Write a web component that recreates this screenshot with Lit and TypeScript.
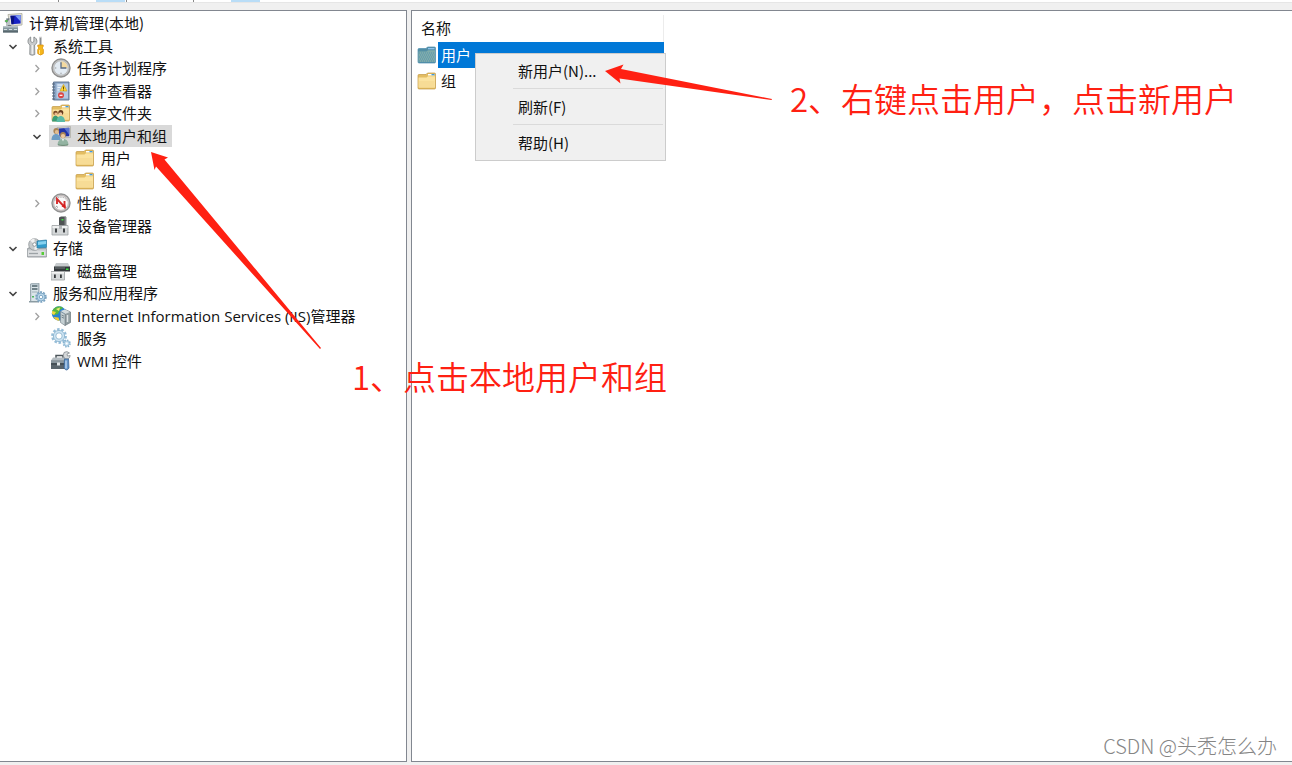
import { LitElement, html, css, svg, nothing, type TemplateResult } from "lit";
import { customElement } from "lit/decorators.js";
import { classMap } from "lit/directives/class-map.js";

type Node = { level: number; icon: string; latin?: string; text: string; toggle?: "open" | "closed"; selected?: boolean };

const NODES: Node[] = [
  { level: 0, icon: "computer", text: "计算机管理(本地)" },
  { level: 1, icon: "tools", text: "系统工具", toggle: "open" },
  { level: 2, icon: "clock", text: "任务计划程序", toggle: "closed" },
  { level: 2, icon: "events", text: "事件查看器", toggle: "closed" },
  { level: 2, icon: "shared", text: "共享文件夹", toggle: "closed" },
  { level: 2, icon: "users", text: "本地用户和组", toggle: "open", selected: true },
  { level: 3, icon: "folder", text: "用户" },
  { level: 3, icon: "folder", text: "组" },
  { level: 2, icon: "perf", text: "性能", toggle: "closed" },
  { level: 2, icon: "device", text: "设备管理器" },
  { level: 1, icon: "storage", text: "存储", toggle: "open" },
  { level: 2, icon: "disk", text: "磁盘管理" },
  { level: 1, icon: "server", text: "服务和应用程序", toggle: "open" },
  { level: 2, icon: "iis", latin: "Internet Information Services (IIS)", text: "管理器", toggle: "closed" },
  { level: 2, icon: "gears", text: "服务" },
  { level: 2, icon: "wmi", latin: "WMI", text: " 控件" },
];

const folderShape = svg`
  <path d="M1 4.500q0-1 1-1h7l1.500-1.500h7q1 0 1 1V17q0 1-1 1H2q-1 0-1-1z" fill="#e3bd62" stroke="#c39a45" stroke-width=".7"/>
  <path d="M11 3h6.500v1.500H11z" fill="#fff"/><path d="M14.500 3h3v1.300h-3z" fill="#3f9be0"/>
  <path d="M1.500 6.500h8l1.500-1.300h7V16.500H1.500z" fill="#fbe3a0"/>
  <path d="M2 10h15.500v6.500H2z" fill="#f7dc96"/>`;

const ICONS: Record<string, TemplateResult> = {
  computer: svg`
    <path d="M5 1.500 19 0.500V12L7 13z" fill="#e4e4dc" stroke="#aaa99b" stroke-width=".8"/>
    <path d="M7.500 2.800 17.600 2v8.600l-9.100.7z" fill="#1823c4"/>
    <path d="M12 2.500l5.600-.5v6.500z" fill="#7d9af5"/><path d="M7.500 2.800l4 .2-1 8.200-2 .1z" fill="#0b1280"/>
    <path d="M3 5h4v8H3z" fill="#bcc3c6"/><path d="M1.500 8l4-3 1 1-3 4z" fill="#707b82"/><path d="M2.500 7h2v2h-2z" fill="#52c34a"/>
    <path d="M5 12h3l1 2H4z" fill="#747b80"/>
    <path d="M0 13h15v6.500H0z" fill="#86979f"/><path d="M0 13h15v1.500H0z" fill="#b9c4c9"/>
    <path d="M1 16h3v1H1zM6 16h3v1H6zM11 16h3v1h-3z" fill="#d6dfe2"/><path d="M0 17.500h15v2H0z" fill="#59686f"/>`,
  tools: svg`
    <path d="M3.700 1v4.500l1.600 1 1.600-1V1c2 .8 3 2.500 3 4.300 0 1.900-1 3-2.300 3.700l.2 9.500q-2.500 1.500-5 0L3 9C1.700 8.200 1 7 1 5.300c0-2 1.100-3.600 2.700-4.300z" fill="#c9cbcc" stroke="#85898b" stroke-width=".9"/>
    <path d="M5.300 9v9" stroke="#f2f2f2" stroke-width="1.200"/>
    <path d="M12.500 1h2v8h-2z" fill="#8c8f91"/><path d="M12 1.200h3" stroke="#d9d9d9"/>
    <path d="M10.800 9h5.400v1.500l-1 1.500 1.200 1.500v4q-2.900 3-5.700 0v-4l1.200-1.500-1.100-1.500z" fill="#f5b71c" stroke="#d98d08" stroke-width=".7"/>
    <path d="M12.500 14v4" stroke="#ffe59a"/>`,
  clock: svg`
    <circle cx="10" cy="10" r="9" fill="#c9c9c9" stroke="#8f8f8f" stroke-width="1.400"/>
    <circle cx="10" cy="10" r="7.200" fill="#e3ebf3" stroke="#aaa" stroke-width=".6"/>
    <path d="M10 10V3.200A6.800 6.800 0 0 1 16.800 10z" fill="#f3d9a0"/>
    <path d="M10 3.800v1.500M10 14.700v1.500M3.800 10h1.500M14.700 10h1.500" stroke="#999"/>
    <path d="M10 4.500V10h5" fill="none" stroke="#596b84" stroke-width="1.300"/>`,
  events: svg`
    <path d="M2.500 1h15.500v18H2.500z" fill="#8aa4c4" stroke="#5c7390" stroke-width=".9"/>
    <path d="M5.500 2.500h11.500v15H5.500z" fill="#b4cae4"/><path d="M6.500 3.500h5v1h-5zM6.500 6h3v1h-3zM6.500 8.500h2v1h-2z" fill="#e9f2fb"/>
    <path d="M1 3h3M1 6h3M1 9h3M1 12h3M1 15h3M1 18h3" stroke="#54647a"/>
    <path d="M12.500 3.500 16 10H9z" fill="#ffd83a" stroke="#d2a51c" stroke-width=".7"/><path d="M12.500 5.500v2.500M12.500 8.500v1" stroke="#6b5300"/>
    <circle cx="10" cy="14.300" r="3" fill="#dc4543"/><path d="M8.500 14.300h3" stroke="#fff" stroke-width="1.200"/>`,
  shared: svg`${folderShape}
    <circle cx="4.500" cy="10" r="2.300" fill="#7a4a24"/><path d="M1 18.500c0-8 7-8 7 0z" fill="#3a9d74"/><circle cx="4.900" cy="11" r="1.500" fill="#edbd92"/>
    <circle cx="9.800" cy="9.500" r="2.500" fill="#683b1e"/><path d="M5.500 19c0-8 8.500-8 8.500 0z" fill="#5bbba6"/><circle cx="9.500" cy="10.900" r="1.700" fill="#f1c9a0"/>`,
  users: svg`
    <path d="M6 1.500 19.500.5V11.500L7 12z" fill="#dcdcd8" stroke="#aaaaa2" stroke-width=".7"/>
    <path d="M7.500 2.400 18.300 1.700v8.500L8.500 10.600z" fill="#2234a8"/><path d="M13 2.100l5.300-.4v7z" fill="#5a72cf"/>
    <circle cx="5.300" cy="5" r="2.900" fill="#a98455"/><circle cx="5.800" cy="5.900" r="2" fill="#e2bd94"/>
    <path d="M.5 14c0-8 9-8 9 0z" fill="#6d9cc4"/>
    <circle cx="12" cy="9" r="2.900" fill="#a98455"/><circle cx="12" cy="10.100" r="2.100" fill="#ecc9a1"/>
    <path d="M6.500 19c0-8.500 11-8.500 11 0z" fill="#93b3a2"/><path d="M7 18.800c2 .8 8 .8 10 0" stroke="#64846e" fill="none"/>
    <path d="M10.800 13l1.200 2.500 1.200-2.500z" fill="#e9f2ee"/>`,
  folder: folderShape,
  perf: svg`
    <circle cx="10" cy="10" r="9" fill="#cfcfcf" stroke="#929292" stroke-width="1.400"/>
    <circle cx="10" cy="10" r="7.300" fill="#fafafa" stroke="#a99" stroke-width=".6"/>
    <path d="M4 7.500a7 7 0 0 1 12 0" fill="none" stroke="#888" stroke-dasharray="1 1.200"/>
    <path d="M6 11V6l7.500 8V8" fill="none" stroke="#d52c2c" stroke-width="1.900"/><path d="M10.500 13.500l4.500 1.500-1-4z" fill="#d51c1c"/>
    <path d="M5 13l2 1.500" stroke="#999"/>`,
  device: svg`
    <path d="M8 1.500 10 .5h5V11H8z" fill="#4f5354"/><path d="M13.500 1h2v10h-2z" fill="#85898a"/>
    <path d="M10.500 3h2v1.500h-2z" fill="#43e24a"/>
    <path d="M1 9.500h16V19H1z" fill="#d4d7d8" stroke="#9da1a3" stroke-width=".8"/><path d="M1.500 10h15v2h-15z" fill="#eff0f0"/>
    <path d="M4 12.500h2v4H4zM12 12.500h2v4h-2z" fill="#3f4345"/><path d="M8 10h3v3H8z" fill="#b2b6b8"/>`,
  storage: svg`
    <path d="M1 10h18l1 2v6q0 1-1 1H1q-1 0-1-1v-6z" fill="#c2c6c9" stroke="#858b90" stroke-width=".8"/>
    <path d="M1 12.500h17.500V18H1z" fill="#dcdee0"/><path d="M2 15.500h9" stroke="#9ca2a6" stroke-width="1.300"/>
    <circle cx="7.500" cy="6.500" r="5.800" fill="#c6cacc" stroke="#8e9497" stroke-width=".8"/><path d="M7.500 6.500 3 2.500q2-2 4.500-1.800zM7.500 6.500l5 3q-2 2.500-5 2.500z" fill="#f0f0f0"/>
    <circle cx="7.500" cy="6.500" r="1.800" fill="#fff" stroke="#838a8d" stroke-width=".8"/>
    <path d="M10 3 19.500 2v7.500l-9.500.5z" fill="#319bcb" stroke="#2b789f" stroke-width=".7"/><path d="M11 3.800 19 3v3l-8 1z" fill="#86d1ef"/>
    <path d="M14.500 14h2.500v3h-2.500z" fill="#57cc37"/>`,
  disk: svg`
    <path d="M5 2h12l2 4H3z" fill="#c7cbcd"/><path d="M3 5.500h16v5H3z" fill="#353a3d"/><path d="M4 6.500h10v1H4z" fill="#777d80"/><path d="M15 7.500h2.500V9H15z" fill="#39de3f"/>
    <path d="M0 10.500h13.500V19H0z" fill="#d6d9da" stroke="#9ea2a3" stroke-width=".8"/><path d="M.5 11h12.500v1.500H.5z" fill="#f4f4f4"/>
    <path d="M3 13.500h1.800V17H3zM9 13.500h1.800V17H9z" fill="#35393b"/>`,
  server: svg`
    <path d="M3.500 1 4.500.2h7.500V18.500H3.500z" fill="#b9c7cf" stroke="#8a9ba2" stroke-width=".8"/><path d="M4.500 2h6.500v16H4.500z" fill="#dbe5e9"/>
    <path d="M5 3h5.500M5 6h5.500" stroke="#4e6169" stroke-width="1.300"/><path d="M5 9h5.500" stroke="#9fb0b7"/><path d="M5 13h2v1.500H5z" fill="#4eb95f"/>
    <path d="M2 18h10v1.500H2z" fill="#8b9ba2"/>
    <circle cx="14" cy="14" r="4.900" fill="none" stroke="#7aa2c0" stroke-width="1.700" stroke-dasharray="2 1.078"/>
    <circle cx="14" cy="14" r="4" fill="#b8d6ea" stroke="#7aa4c2" stroke-width=".9"/><circle cx="14" cy="14" r="1.700" fill="#fff" stroke="#6e9abb" stroke-width=".8"/>`,
  iis: svg`
    <circle cx="8" cy="7.500" r="7.200" fill="#2a83d0"/><path d="M1 6c1-5 8-7 11-4L9 4 7 8 3 9z" fill="#58b640"/>
    <path d="M5 3l4-1.500L8 5z" fill="#e6ec77"/><path d="M2.500 11l5 .5 1 3.200q-4-.2-6-3.700z" fill="#f4ca31"/><path d="M1 5l4 1-2 3-2-1z" fill="#f0d53e"/>
    <path d="M14 3.500l5.500 2.500v10.500L14 19.500z" fill="#929fa2" stroke="#6d797e" stroke-width=".7"/>
    <path d="M9.500 5 14 3.500 19 6l-5 2z" fill="#d4dcde"/>
    <path d="M9.500 5.500 14 8v11.500L9.500 16.500z" fill="#c5d0d3" stroke="#7e8b90" stroke-width=".7"/><path d="M10.500 9l2.500 1.200M10.500 11l2.500 1.200" stroke="#74858c"/><path d="M16.500 9v7" stroke="#dde3e4" stroke-width="1.500"/>`,
  gears: svg`
    <circle cx="8" cy="8" r="6.700" fill="none" stroke="#95bdd8" stroke-width="2.400" stroke-dasharray="2.500 1.710"/>
    <circle cx="8" cy="8" r="5.600" fill="#cfe5f3" stroke="#8db6d0" stroke-width=".9"/><circle cx="8" cy="8" r="3.200" fill="#fff" stroke="#8fb7d0" stroke-width=".9"/>
    <circle cx="15.700" cy="15.500" r="3.300" fill="none" stroke="#87b4d2" stroke-width="1.600" stroke-dasharray="1.400 1.190"/>
    <circle cx="15.700" cy="15.500" r="2.600" fill="#c9e2f2" stroke="#7facc9" stroke-width=".7"/><circle cx="15.700" cy="15.500" r="1" fill="#fff"/>`,
  wmi: svg`
    <path d="M5 7V4.500h7V7" fill="none" stroke="#4d565b" stroke-width="1.500"/>
    <path d="M2 6.500h13l3 3H0z" fill="#b3bbc0"/><path d="M0 9.500h15.500V18H0z" fill="#59646b"/><path d="M0 9.500h15.500v2.500H0z" fill="#8b979e"/>
    <path d="M0 13h15" stroke="#343d42"/><path d="M6 11.500h3v3H6z" fill="#dfe4e6"/>
    <path d="M13 1.500q3-2 5.500.5l-2.500 1 .5 2 2.700-.5q-.2 2.500-2.200 3.500h-3Q11 5 13 1.500z" fill="#d6d9db" stroke="#7b8286" stroke-width=".7"/>
    <path d="M13.500 8h4l.5 9q-2.500 4-5 0z" fill="#6595c9" stroke="#335f91" stroke-width=".7"/><path d="M15 9.500v8" stroke="#c9e0f5" stroke-width="1.200"/>`,
  folderSelected: svg`
    <path d="M1 4.500q0-1 1-1h7l1.500-1.500h7q1 0 1 1V17q0 1-1 1H2q-1 0-1-1z" fill="#528ea5" stroke="#4d8fb2" stroke-width=".7"/>
    <path d="M1.500 6.500h8l1.500-1.300h7V17H1.500z" fill="#7fabaa"/><path d="M11 3h6.500v1.300H11z" fill="#8ec2ed"/>
    <path d="M2 8h15.500M2 12h15.500M2 16h15.500" stroke="#5493b0" stroke-dasharray="1 1"/>
    <path d="M3 10h14.500M3 14h14.500" stroke="#5493b0" stroke-dasharray="1 1"/>`,
};

const icon = (name: string) => html`<svg class="icon" viewBox="0 0 20 20" aria-hidden="true">${ICONS[name]}</svg>`;

@customElement("app-root")
export class AppRoot extends LitElement {
  static styles = css`
    :host {
      position: relative;
      display: flex;
      flex-direction: column;
      height: 100vh;
      overflow: hidden;
      background: #f0f0f0;
      color: #111;
      font: 15px/22px "Noto Sans CJK SC", sans-serif;
    }
    button {
      border: 0;
      padding: 0;
      background: none;
      font: inherit;
      color: inherit;
      text-align: left;
    }
    .toolbar {
      display: flex;
      flex: none;
      height: 2px;
      padding-left: 58px;
      background: #fff;
      border-bottom: 1px solid #e6e6e6;
    }
    .mark { width: 1px; background: #888; }
    .tool { width: 29px; margin: 0 1px 0 37px; background: #b9ddf7; }
    .gap { width: 66px; }
    .panes {
      flex: 1;
      min-height: 0;
      display: grid;
      grid-template-columns: 407px 1fr;
      gap: 4px;
      padding: 7px 0 3px;
    }
    .pane {
      min-width: 0;
      background: #fff;
      border: 1px solid #828790;
      box-sizing: border-box;
    }
    .pane.left { border-left: 0; }
    .pane.right { border-right: 0; padding-left: 1px; }
    .tree {
      display: grid;
      grid-auto-rows: 1fr;
      height: 360px;
      margin: 0;
      padding: 1px 0 0;
      list-style: none;
    }
    .row { display: flex; align-items: center; gap: 4px; white-space: nowrap; }
    .level-0 { padding-left: 1px; }
    .level-1 { padding-left: 5px; }
    .level-2 { padding-left: 29px; }
    .level-3 { padding-left: 73px; }
    .toggle { display: flex; width: 16px; height: 16px; flex: none; }
    .blank { width: 16px; flex: none; }
    .chevron { width: 16px; height: 16px; fill: none; stroke: #a0a0a0; stroke-width: 1.3; }
    .open .chevron { stroke: #444; stroke-width: 1.6; }
    .icon { width: 20px; height: 20px; flex: none; display: block; }
    .label {
      display: flex;
      align-items: center;
      gap: 6px;
      padding: 0 5px 0 2px;
      height: 22px;
      color: inherit;
      text-decoration: none;
    }
    .label.selected { background: #d9d9d9; }
    .latin { font-family: "Open Sans", sans-serif; line-height: 20px; }
    table { width: 251px; border-collapse: collapse; margin-top: 4px; }
    th { height: 25px; padding: 0 0 2px 8px; font-weight: 400; text-align: left; border-right: 1px solid #ececec; }
    td { height: 26px; padding: 0; }
    .file { display: flex; align-items: center; padding-left: 4px; gap: 1px; }
    .name { flex: 1; padding: 2px 3px; }
    .chosen .name { background: #0078d7; color: #fff; }
    .menu {
      position: absolute;
      left: 475px;
      top: 53px;
      width: 191px;
      box-sizing: border-box;
      display: flex;
      flex-direction: column;
      padding: 0 2px;
      background: #f0f0f0;
      border: 1px solid #ccc;
    }
    .menu button { height: 34px; padding-left: 40px; }
    .menu hr { width: 150px; margin: 0 0 1px auto; border: 0; border-top: 1px solid #dadada; }
    .arrows { position: absolute; left: 0; top: 0; width: 800px; height: 400px; fill: #ff2012; pointer-events: none; }
    .note {
      position: absolute;
      margin: 0;
      font-size: 33px;
      line-height: 44px;
      font-weight: 350;
      color: #ff2012;
      white-space: nowrap;
    }
    .step-one { left: 352px; top: 354px; }
    .step-two { left: 790px; top: 76px; }
    .credit {
      position: absolute;
      right: 15px;
      bottom: 5px;
      font-size: 20px;
      line-height: 28px;
      font-weight: 300;
      color: #858585;
    }
  `;

  private renderToggle(node: Node) {
    if (!node.toggle) return node.level === 2 ? html`<span class="blank"></span>` : nothing;
    const open = node.toggle === "open";
    return html`<button class=${classMap({ toggle: true, open })} aria-label=${(node.latin ?? "") + node.text} aria-expanded=${open}>
      <svg class="chevron" viewBox="0 0 16 16"><path d=${open ? "M4.500 7 8 10.300 11.500 7" : "M6.500 5 9.800 8.500 6.500 12"}></path></svg>
    </button>`;
  }

  private renderText(node: Node) {
    return html`<span>${node.latin ? html`<span class="latin">${node.latin}</span>` : nothing}${node.text}</span>`;
  }

  render() {
    return html`
      <div class="toolbar">
        <span class="mark"></span><span class="tool"></span><span class="mark"></span>
        <span class="gap"></span><span class="mark"></span><span class="tool"></span>
      </div>
      <main class="panes">
        <nav class="pane left">
          <ul class="tree">
            ${NODES.map(
              (node) => html`<li class="row level-${node.level}">
                ${this.renderToggle(node)}
                <a href="#" class=${classMap({ label: true, selected: !!node.selected })}>${icon(node.icon)}${this.renderText(node)}</a>
              </li>`,
            )}
          </ul>
        </nav>
        <section class="pane right">
          <table>
            <thead><tr><th scope="col">名称</th></tr></thead>
            <tbody>
              <tr class="chosen"><td><div class="file">${icon("folderSelected")}<span class="name">用户</span></div></td></tr>
              <tr><td><div class="file">${icon("folder")}<span class="name">组</span></div></td></tr>
            </tbody>
          </table>
        </section>
      </main>
      <div class="menu" role="menu">
        <button role="menuitem">新用户(N)...</button>
        <hr />
        <button role="menuitem">刷新(F)</button>
        <hr />
        <button role="menuitem">帮助(H)</button>
      </div>
      <svg class="arrows" viewBox="0 0 800 400" aria-hidden="true">
        <path d="M151 152 168 157.500 164.500 159.500 321 348 320 349 156 166.500 154.500 170z"></path>
        <path d="M605 71 623.500 64.500 621 69 772 99 771.500 100 619.500 78.500 620.500 83.500z"></path>
      </svg>
      <p class="note step-one">1、点击本地用户和组</p>
      <p class="note step-two">2、右键点击用户，点击新用户</p>
      <span class="credit">CSDN @头秃怎么办</span>
    `;
  }
}
